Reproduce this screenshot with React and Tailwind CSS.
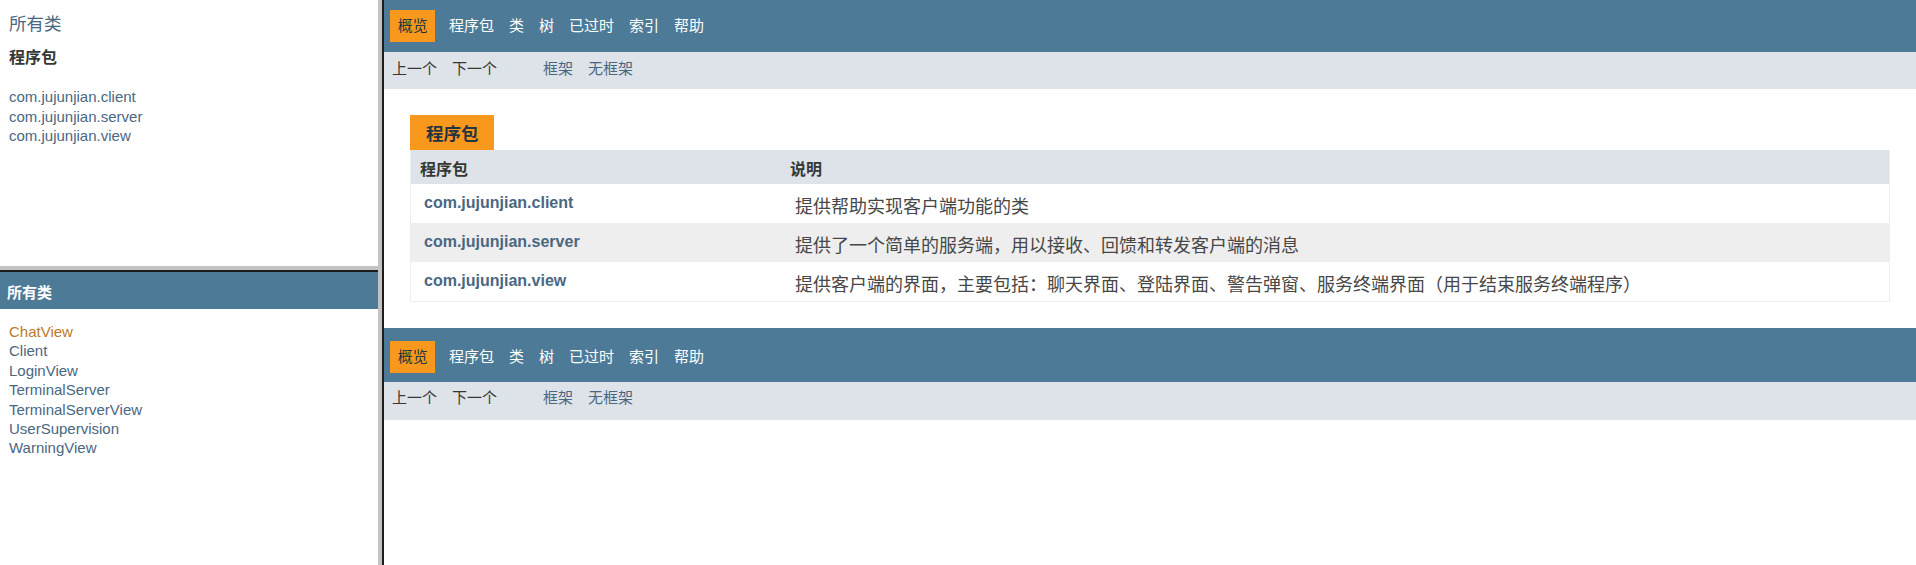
import React from 'react'

// Javadoc-style frameset: package list, class list, overview summary
const navItems = ['程序包', '类', '树', '已过时', '索引', '帮助']

const packages = [
  { name: 'com.jujunjian.client', desc: '提供帮助实现客户端功能的类' },
  { name: 'com.jujunjian.server', desc: '提供了一个简单的服务端，用以接收、回馈和转发客户端的消息' },
  {
    name: 'com.jujunjian.view',
    desc: '提供客户端的界面，主要包括：聊天界面、登陆界面、警告弹窗、服务终端界面（用于结束服务终端程序）',
  },
]

const classes = [
  'ChatView',
  'Client',
  'LoginView',
  'TerminalServer',
  'TerminalServerView',
  'UserSupervision',
  'WarningView',
]

function TopNav({ tall }) {
  return (
    <div className={`flex bg-[#4d7a97] ${tall ? 'h-[54px] pt-[13px]' : 'h-[52px] pt-[10px]'}`}>
      <div className="mx-[6.25px] flex h-[32px] items-center bg-[#f8981d] px-[7.5px] text-[15px] leading-[20px] text-[#253441]">
        概览
      </div>
      {navItems.map((item) => (
        <div key={item} className="flex h-[32px] items-center px-[7.5px] text-[15px] leading-[20px] text-white">
          {item}
        </div>
      ))}
    </div>
  )
}

function SubNav({ tall }) {
  return (
    <div className={`flex bg-[#dee3e9] text-[15px] leading-[20px] ${tall ? 'h-[38px] pt-[6px]' : 'h-[37px] pt-[7px]'}`}>
      <span className="pl-[8px] text-[#353833]">上一个</span>
      <span className="pl-[15px] text-[#353833]">下一个</span>
      <span className="pl-[46px] text-[#4a6782]">框架</span>
      <span className="pl-[15px] text-[#4a6782]">无框架</span>
    </div>
  )
}

export default function App() {
  return (
    <div className="flex h-[565px] w-[1916px] overflow-hidden bg-white font-['Liberation_Sans','Noto_Sans_CJK_SC',sans-serif]">
      {/* Left frames */}
      <div className="flex w-[378px] shrink-0 flex-col">
        <div className="h-[266px] shrink-0 pl-[9px] pt-[14px]">
          <div className="text-[17.5px] leading-[20px] text-[#4a6782]">所有类</div>
          <h2 className="mt-[14px] text-[16px] font-bold leading-[20px] text-[#353833]">程序包</h2>
          <ul className="mt-[19px]">
            {packages.map((p) => (
              <li key={p.name} className="text-[15px] leading-[19.5px] text-[#4a6782]">
                {p.name}
              </li>
            ))}
          </ul>
        </div>
        <div className="h-[4px] shrink-0 bg-[#c3c3c3]" />
        <div className="flex-1 border-t-2 border-[#1c1c1c]">
          <div className="flex h-[37px] items-center bg-[#4d7a97] pl-[7px] pt-[4px] text-[15px] font-bold leading-[20px] text-white">
            所有类
          </div>
          <ul className="mt-[13px] pl-[9px]">
            {classes.map((c, i) => (
              <li
                key={c}
                className={`text-[15px] leading-[19.4px] ${i === 0 ? 'text-[#bb7a2a]' : 'text-[#4a6782]'}`}
              >
                {c}
              </li>
            ))}
          </ul>
        </div>
      </div>

      <div className="w-[4px] shrink-0 bg-[#c3c3c3]" />

      {/* Right frame */}
      <div className="flex-1 border-l-2 border-[#1c1c1c]">
        <TopNav />
        <SubNav />

        <div className="px-[26px] pt-[26px]">
          <div className="flex">
            <div className="h-[35px] bg-[#f8981d] pl-[16px] pr-[15px] pt-[9px] text-[17.5px] font-bold leading-[20px] text-[#253441]">
              程序包
            </div>
          </div>
          <div className="border-x border-b border-[#eeeeee]">
            <div className="flex h-[34px] bg-[#dee3e9] pt-[10px] text-[16px] font-bold leading-[20px] text-[#353833]">
              <div className="w-[370px] shrink-0 pl-[9px]">程序包</div>
              <div className="pl-[9px]">说明</div>
            </div>
            {packages.map((p, i) => (
              <div key={p.name} className={`flex h-[39px] ${i === 1 ? 'bg-[#eeeeef]' : 'bg-white'}`}>
                <div className="w-[370px] shrink-0 pl-[13px] pt-[9px] text-[16px] font-bold leading-[20px] text-[#4a6782]">
                  {p.name}
                </div>
                <div className="pl-[14px] pt-[11px] text-[18px] leading-[24px] text-[#474747]">{p.desc}</div>
              </div>
            ))}
          </div>
        </div>

        <div className="mt-[26px]">
          <TopNav tall />
          <SubNav tall />
        </div>
      </div>
    </div>
  )
}
